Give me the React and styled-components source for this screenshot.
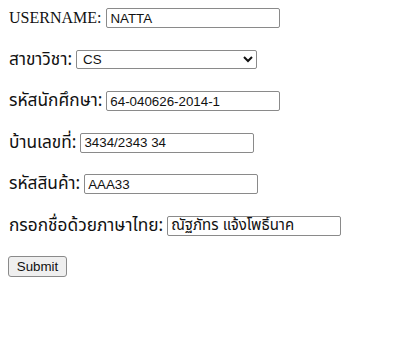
import React from 'react'
import styled, { createGlobalStyle } from 'styled-components'

const GlobalStyle = createGlobalStyle`
  html, body {
    margin: 0;
    background: #fff;
  }
  body {
    font-family: "Liberation Serif", "Times New Roman", serif;
    font-size: 16px;
    color: #000;
  }
`

const Form = styled.form`
  display: flex;
  flex-direction: column;
  align-items: flex-start;
  gap: 21.5px;
  padding: 8px 8px;
`

const Row = styled.div`
  display: flex;
  align-items: center;
  height: 20px;
  gap: ${p => p.$gap || 4}px;
`

const Label = styled.label`
  white-space: nowrap;
  padding-left: 1px;
  font-family: ${p => p.$thai
    ? 'Tahoma, "Noto Sans Thai", "Noto Sans", "DejaVu Sans", sans-serif'
    : '"Liberation Serif", "Times New Roman", serif'};
  font-size: ${p => p.$thai ? 17.3 : 16}px;
  color: #111;
`

const TextInput = styled.input`
  box-sizing: border-box;
  width: 174px;
  height: 20px;
  padding: 1px 3px;
  border: 1px solid #8a8a8a;
  border-radius: 2px;
  font-family: "Liberation Sans", Arial, ${p => p.$thai ? 'Tahoma, "Noto Sans Thai", ' : ''}sans-serif;
  font-size: ${p => p.$thai ? 15 : 13.33}px;
  color: #111;
  background: #fff;
`

const Select = styled.select`
  box-sizing: border-box;
  width: 181px;
  height: 19px;
  padding: 0 2px;
  border: 1px solid #8a8a8a;
  border-radius: 2px;
  font-family: "Liberation Sans", Arial, sans-serif;
  font-size: 13.33px;
  color: #111;
  background: #fff;
`

const SubmitButton = styled.button`
  box-sizing: border-box;
  width: 59px;
  height: 21px;
  margin-top: -1px;
  padding: 1px 6px;
  border: 1px solid #8a8a8a;
  border-radius: 3px;
  background: #efefef;
  font-family: "Liberation Sans", Arial, sans-serif;
  font-size: 13.33px;
  color: #111;
`

export default function App() {
  return (
    <>
      <GlobalStyle />
      <Form onSubmit={e => e.preventDefault()}>
        <Row $gap={5}>
          <Label>USERNAME:</Label>
          <TextInput defaultValue="NATTA" />
        </Row>
        <Row>
          <Label $thai>สาขาวิชา:</Label>
          <Select defaultValue="CS">
            <option value="CS">CS</option>
            <option value="IT">IT</option>
          </Select>
        </Row>
        <Row>
          <Label $thai>รหัสนักศึกษา:</Label>
          <TextInput defaultValue="64-040626-2014-1" />
        </Row>
        <Row>
          <Label $thai>บ้านเลขที่:</Label>
          <TextInput defaultValue="3434/2343 34" />
        </Row>
        <Row>
          <Label $thai>รหัสสินค้า:</Label>
          <TextInput defaultValue="AAA33" />
        </Row>
        <Row>
          <Label $thai>กรอกชื่อด้วยภาษาไทย:</Label>
          <TextInput $thai defaultValue="ณัฐภัทร แจ้งโพธิ์นาค" />
        </Row>
        <Row>
          <SubmitButton type="submit">Submit</SubmitButton>
        </Row>
      </Form>
    </>
  )
}
